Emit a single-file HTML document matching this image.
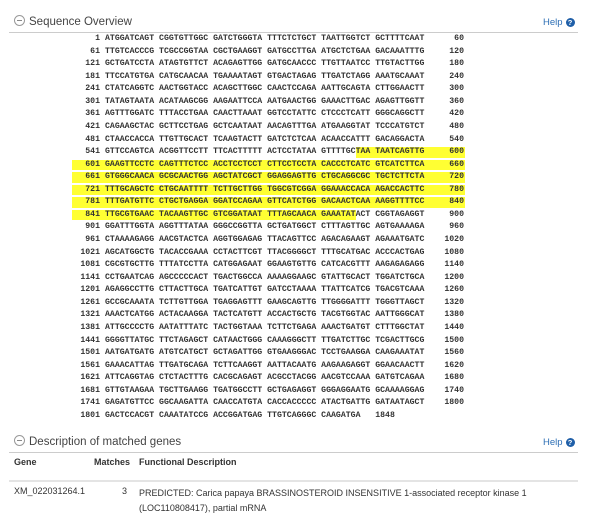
<!DOCTYPE html>
<html><head><meta charset="utf-8"><style>
body{margin:0;width:600px;height:513px;background:#fff;position:relative;overflow:hidden;font-family:"Liberation Sans",Arial,sans-serif;color:#333}
.hd{position:absolute;left:14px;font-size:11.5px;color:#444}
.hd .c{display:inline-block;width:9px;height:9px;border:1px solid #999;border-radius:50%;position:relative;vertical-align:-1px;margin-right:4px}
.hd .c:after{content:"";position:absolute;left:2px;right:2px;top:4px;height:1px;background:#888}
.help{position:absolute;left:543px;font-size:9.5px;color:#2e6fb5}
.help b{display:inline-block;width:9px;height:9px;border-radius:50%;background:#1f5fa8;color:#fff;font-size:7.5px;text-align:center;line-height:9px;vertical-align:0;margin-left:3px}
.ln{position:absolute;left:9px;width:569px;height:1px;background:#ccc}
#seq{position:absolute;left:0;top:33px;width:600px;font-family:"Liberation Mono","Courier New",monospace;font-size:8.2px;line-height:12.57px;color:#333;font-weight:bold}
.r{position:relative;height:12.57px;width:600px}
.n{position:absolute;right:500px;white-space:pre}
.s{position:absolute;left:105px;white-space:pre}
.e{position:absolute;right:136px;white-space:pre}
.y{position:absolute;top:1px;height:10.5px;background:#ffff33}
.t{position:absolute;font-size:9px;color:#333}
</style></head><body>
<div class="hd" style="top:15px"><span class="c"></span>Sequence Overview</div>
<div class="help" style="top:17px">Help<b>?</b></div>
<div class="ln" style="top:32px"></div>
<div id="seq"><div class="r"><span class="n">1</span><span class="s">ATGGATCAGT CGGTGTTGGC GATCTGGGTA TTTCTCTGCT TAATTGGTCT GCTTTTCAAT</span><span class="e">60</span></div><div class="r"><span class="n">61</span><span class="s">TTGTCACCCG TCGCCGGTAA CGCTGAAGGT GATGCCTTGA ATGCTCTGAA GACAAATTTG</span><span class="e">120</span></div><div class="r"><span class="n">121</span><span class="s">GCTGATCCTA ATAGTGTTCT ACAGAGTTGG GATGCAACCC TTGTTAATCC TTGTACTTGG</span><span class="e">180</span></div><div class="r"><span class="n">181</span><span class="s">TTCCATGTGA CATGCAACAA TGAAAATAGT GTGACTAGAG TTGATCTAGG AAATGCAAAT</span><span class="e">240</span></div><div class="r"><span class="n">241</span><span class="s">CTATCAGGTC AACTGGTACC ACAGCTTGGC CAACTCCAGA AATTGCAGTA CTTGGAACTT</span><span class="e">300</span></div><div class="r"><span class="n">301</span><span class="s">TATAGTAATA ACATAAGCGG AAGAATTCCA AATGAACTGG GAAACTTGAC AGAGTTGGTT</span><span class="e">360</span></div><div class="r"><span class="n">361</span><span class="s">AGTTTGGATC TTTACCTGAA CAACTTAAAT GGTCCTATTC CTCCCTCATT GGGCAGGCTT</span><span class="e">420</span></div><div class="r"><span class="n">421</span><span class="s">CAGAAGCTAC GCTTCCTGAG GCTCAATAAT AACAGTTTGA ATGAAGGTAT TCCCATGTCT</span><span class="e">480</span></div><div class="r"><span class="n">481</span><span class="s">CTAACCACCA TTGTTGCACT TCAAGTACTT GATCTCTCAA ACAACCATTT GACAGGACTA</span><span class="e">540</span></div><div class="r"><span class="y" style="left:356px;width:109px"></span><span class="n">541</span><span class="s">GTTCCAGTCA ACGGTTCCTT TTCACTTTTT ACTCCTATAA GTTTTGCTAA TAATCAGTTG</span><span class="e">600</span></div><div class="r"><span class="y" style="left:72px;width:393px"></span><span class="n">601</span><span class="s">GAAGTTCCTC CAGTTTCTCC ACCTCCTCCT CTTCCTCCTA CACCCTCATC GTCATCTTCA</span><span class="e">660</span></div><div class="r"><span class="y" style="left:72px;width:393px"></span><span class="n">661</span><span class="s">GTGGGCAACA GCGCAACTGG AGCTATCGCT GGAGGAGTTG CTGCAGGCGC TGCTCTTCTA</span><span class="e">720</span></div><div class="r"><span class="y" style="left:72px;width:393px"></span><span class="n">721</span><span class="s">TTTGCAGCTC CTGCAATTTT TCTTGCTTGG TGGCGTCGGA GGAAACCACA AGACCACTTC</span><span class="e">780</span></div><div class="r"><span class="y" style="left:72px;width:393px"></span><span class="n">781</span><span class="s">TTTGATGTTC CTGCTGAGGA GGATCCAGAA GTTCATCTGG GACAACTCAA AAGGTTTTCC</span><span class="e">840</span></div><div class="r"><span class="y" style="left:72px;width:284px"></span><span class="n">841</span><span class="s">TTGCGTGAAC TACAAGTTGC GTCGGATAAT TTTAGCAACA GAAATATACT CGGTAGAGGT</span><span class="e">900</span></div><div class="r"><span class="n">901</span><span class="s">GGATTTGGTA AGGTTTATAA GGGCCGGTTA GCTGATGGCT CTTTAGTTGC AGTGAAAAGA</span><span class="e">960</span></div><div class="r"><span class="n">961</span><span class="s">CTAAAAGAGG AACGTACTCA AGGTGGAGAG TTACAGTTCC AGACAGAAGT AGAAATGATC</span><span class="e">1020</span></div><div class="r"><span class="n">1021</span><span class="s">AGCATGGCTG TACACCGAAA CCTACTTCGT TTACGGGGCT TTTGCATGAC ACCCACTGAG</span><span class="e">1080</span></div><div class="r"><span class="n">1081</span><span class="s">CGCGTGCTTG TTTATCCTTA CATGGAGAAT GGAAGTGTTG CATCACGTTT AAGAGAGAGG</span><span class="e">1140</span></div><div class="r"><span class="n">1141</span><span class="s">CCTGAATCAG AGCCCCCACT TGACTGGCCA AAAAGGAAGC GTATTGCACT TGGATCTGCA</span><span class="e">1200</span></div><div class="r"><span class="n">1201</span><span class="s">AGAGGCCTTG CTTACTTGCA TGATCATTGT GATCCTAAAA TTATTCATCG TGACGTCAAA</span><span class="e">1260</span></div><div class="r"><span class="n">1261</span><span class="s">GCCGCAAATA TCTTGTTGGA TGAGGAGTTT GAAGCAGTTG TTGGGGATTT TGGGTTAGCT</span><span class="e">1320</span></div><div class="r"><span class="n">1321</span><span class="s">AAACTCATGG ACTACAAGGA TACTCATGTT ACCACTGCTG TACGTGGTAC AATTGGGCAT</span><span class="e">1380</span></div><div class="r"><span class="n">1381</span><span class="s">ATTGCCCCTG AATATTTATC TACTGGTAAA TCTTCTGAGA AAACTGATGT CTTTGGCTAT</span><span class="e">1440</span></div><div class="r"><span class="n">1441</span><span class="s">GGGGTTATGC TTCTAGAGCT CATAACTGGG CAAAGGGCTT TTGATCTTGC TCGACTTGCG</span><span class="e">1500</span></div><div class="r"><span class="n">1501</span><span class="s">AATGATGATG ATGTCATGCT GCTAGATTGG GTGAAGGGAC TCCTGAAGGA CAAGAAATAT</span><span class="e">1560</span></div><div class="r"><span class="n">1561</span><span class="s">GAAACATTAG TTGATGCAGA TCTTCAAGGT AATTACAATG AAGAAGAGGT GGAACAACTT</span><span class="e">1620</span></div><div class="r"><span class="n">1621</span><span class="s">ATTCAGGTAG CTCTACTTTG CACGCAGAGT ACGCCTACGG AACGTCCAAA GATGTCAGAA</span><span class="e">1680</span></div><div class="r"><span class="n">1681</span><span class="s">GTTGTAAGAA TGCTTGAAGG TGATGGCCTT GCTGAGAGGT GGGAGGAATG GCAAAAGGAG</span><span class="e">1740</span></div><div class="r"><span class="n">1741</span><span class="s">GAGATGTTCC GGCAAGATTA CAACCATGTA CACCACCCCC ATACTGATTG GATAATAGCT</span><span class="e">1800</span></div><div class="r"><span class="n">1801</span><span class="s">GACTCCACGT CAAATATCCG ACCGGATGAG TTGTCAGGGC CAAGATGA   1848</span></div></div>
<div class="hd" style="top:435px"><span class="c"></span>Description of matched genes</div>
<div class="help" style="top:437px">Help<b>?</b></div>
<div class="ln" style="top:452px"></div>
<div class="t" style="left:14px;top:457px;font-weight:bold">Gene</div>
<div class="t" style="left:94px;top:457px;font-weight:bold">Matches</div>
<div class="t" style="left:139px;top:457px;font-weight:bold">Functional Description</div>
<div class="ln" style="top:480px;background:#e4e4e4;height:2px"></div>
<div class="t" style="left:14px;top:486px">XM_022031264.1</div>
<div class="t" style="left:122px;top:486px">3</div>
<div class="t" style="left:139px;top:486px;line-height:15px">PREDICTED: Carica papaya BRASSINOSTEROID INSENSITIVE 1-associated receptor kinase 1<br>(LOC110808417), partial mRNA</div>
</body></html>
